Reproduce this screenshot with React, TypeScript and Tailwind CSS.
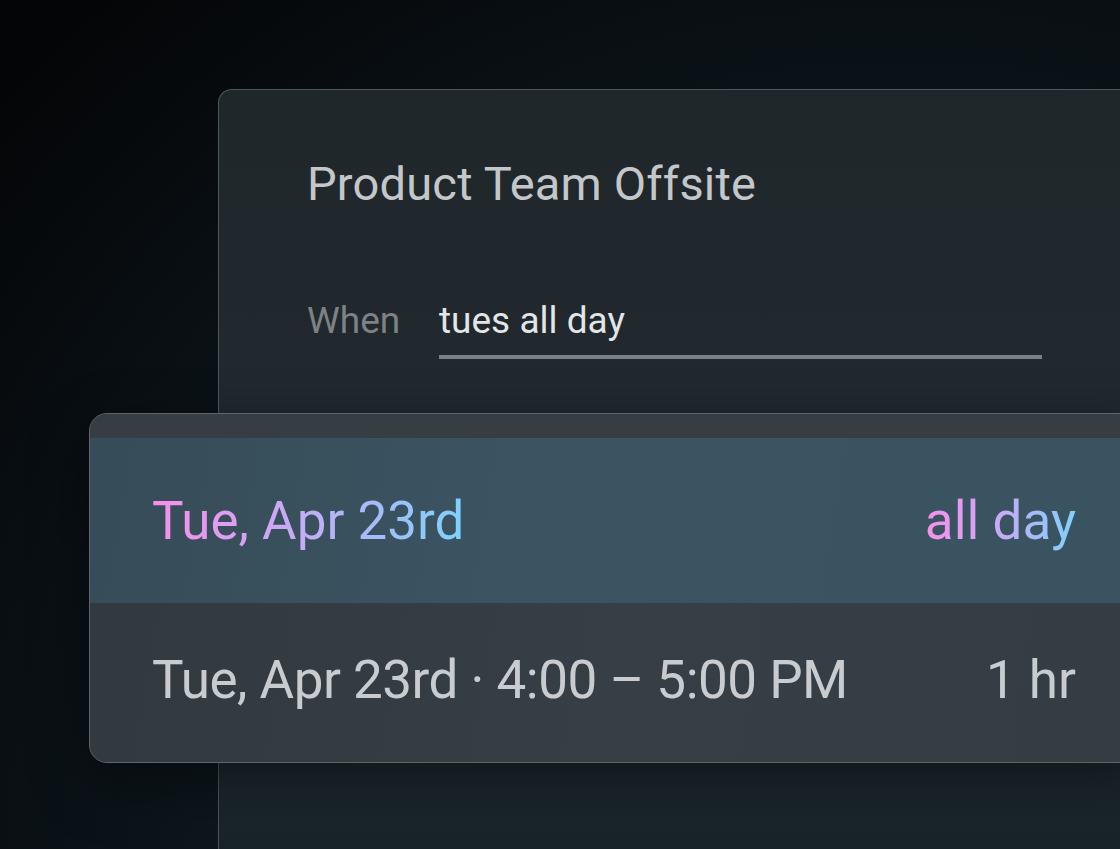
import React from 'react';

const font = { fontFamily: 'Roboto, "Noto Sans", sans-serif' };

export default function App() {
  return (
    <div
      className="relative h-[849px] w-[1120px] overflow-hidden bg-[radial-gradient(ellipse_at_80%_100%,#1a262d_0%,#0e181e_50%,#040507_95%)] pt-[89px] pl-[218px]"
      style={font}
    >
      {/* event card behind */}
      <div className="h-[820px] w-[1000px] rounded-tl-[14px] border-l border-t border-[#50575c] bg-[linear-gradient(180deg,#20272b_0%,#222a30_55%,#1c282e_85%,#141f25_100%)] pl-[88px] pt-[64px]">
        <h1 className="text-[47px] leading-[60px] tracking-[0.2px] text-[#c3c7c9]">Product Team Offsite</h1>
        <div className="mt-[83px] flex items-start">
          <span className="w-[132px] text-[37px] leading-[48px] text-[#7d8285]">When</span>
          <div className="w-[603px]">
            <div className="text-[37px] leading-[48px] text-[#e3e6e7]">tues all day</div>
            <div className="mt-[10px] h-[4px] w-full bg-[#7b8083]" />
          </div>
        </div>
      </div>

      {/* suggestions popup */}
      <div className="absolute left-[89px] top-[413px] w-[1060px] overflow-hidden rounded-l-[18px] border border-[#5d666c] bg-[#353d43] shadow-[0_20px_60px_rgba(0,0,0,0.45)]">
        <div className="h-[24px] bg-[#363e44]" />
        <div className="flex h-[165px] items-center justify-between bg-[linear-gradient(100deg,#364c58_0%,#3b5461_40%,#3a5360_100%)] pl-[62px] pr-[72px]">
          <span className="bg-[linear-gradient(90deg,#f790ea_0%,#c8aaf6_45%,#7fd1fb_100%)] bg-clip-text text-[53px] leading-[64px] text-transparent">
            Tue, Apr 23rd
          </span>
          <span className="bg-[linear-gradient(90deg,#f790ea_0%,#c8aaf6_50%,#7fd1fb_100%)] bg-clip-text text-[53px] leading-[64px] text-transparent">
            all day
          </span>
        </div>
        <div className="flex h-[159px] items-center justify-between bg-[linear-gradient(100deg,#32393f_0%,#363f46_50%,#343d44_100%)] pb-[6px] pl-[62px] pr-[72px]">
          <span className="text-[53px] leading-[64px] tracking-[-0.5px] text-[#c9ccce]">Tue, Apr 23rd · 4:00 – 5:00 PM</span>
          <span className="text-[53px] leading-[64px] text-[#c9ccce]">1 hr</span>
        </div>
      </div>
    </div>
  );
}
